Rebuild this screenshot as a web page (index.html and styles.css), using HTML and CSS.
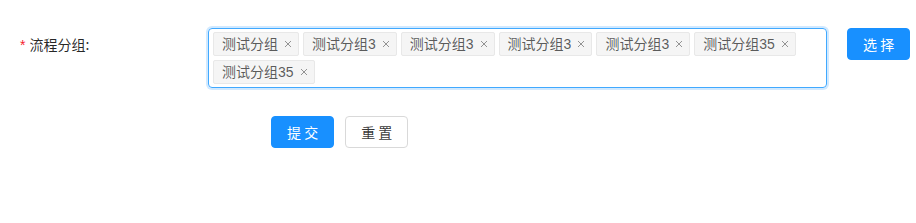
FILE: index.html
```html
<!DOCTYPE html>
<html lang="zh">
<head>
  <meta charset="UTF-8" />
  <title>流程分组</title>
  <link rel="stylesheet" href="styles.css">
</head>
<body>
  <form class="form">
    <div class="form-row">
      <label class="form-label"><span class="required">*</span>流程分组:</label>
      <div class="select-box">
        <span class="tag">测试分组<svg class="tag-close" viewBox="0 0 8 8"><path d="M1 1L7 7M7 1L1 7"/></svg></span>
        <span class="tag">测试分组3<svg class="tag-close" viewBox="0 0 8 8"><path d="M1 1L7 7M7 1L1 7"/></svg></span>
        <span class="tag">测试分组3<svg class="tag-close" viewBox="0 0 8 8"><path d="M1 1L7 7M7 1L1 7"/></svg></span>
        <span class="tag">测试分组3<svg class="tag-close" viewBox="0 0 8 8"><path d="M1 1L7 7M7 1L1 7"/></svg></span>
        <span class="tag">测试分组3<svg class="tag-close" viewBox="0 0 8 8"><path d="M1 1L7 7M7 1L1 7"/></svg></span>
        <span class="tag">测试分组35<svg class="tag-close" viewBox="0 0 8 8"><path d="M1 1L7 7M7 1L1 7"/></svg></span>
        <span class="tag">测试分组35<svg class="tag-close" viewBox="0 0 8 8"><path d="M1 1L7 7M7 1L1 7"/></svg></span>
      </div>
      <button type="button" class="btn btn-primary">选 择</button>
    </div>
    <div class="actions">
      <button type="button" class="btn btn-primary">提 交</button>
      <button type="button" class="btn">重 置</button>
    </div>
  </form>
</body>
</html>
```

FILE: styles.css
```css
* {
  margin: 0;
  padding: 0;
  box-sizing: border-box;
}

body {
  font-family: "Noto Sans CJK SC", "Noto Sans", sans-serif;
  font-size: 14px;
  color: rgba(0, 0, 0, 0.65);
  background: #fff;
  width: 916px;
  height: 223px;
}

.form {
  padding: 28px 0 0 20px;
}

.form-row {
  display: flex;
  align-items: flex-start;
}

.form-label {
  width: 188px;
  height: 32px;
  line-height: 32px;
  color: rgba(0, 0, 0, 0.85);
}

.required {
  color: #f5222d;
  margin-right: 4px;
  font-family: "Liberation Sans", sans-serif;
}

.select-box {
  width: 619px;
  min-height: 60px;
  border: 1px solid #40a9ff;
  border-radius: 4px;
  box-shadow: 0 0 0 2px rgba(24, 144, 255, 0.2);
  padding: 3px 4px;
  display: flex;
  flex-wrap: wrap;
  align-content: flex-start;
  gap: 4px;
}

.tag {
  display: inline-flex;
  align-items: center;
  height: 24px;
  padding: 0 6px 0 8px;
  background: #f5f5f5;
  border: 1px solid #e8e8e8;
  border-radius: 2px;
  line-height: 22px;
  font-family: "Liberation Sans", "Noto Sans CJK SC", sans-serif;
  color: rgba(0, 0, 0, 0.65);
}

.tag-close {
  width: 8px;
  height: 8px;
  margin-left: 6px;
  stroke: rgba(0, 0, 0, 0.4);
  stroke-width: 1;
  fill: none;
}

.btn {
  height: 32px;
  padding: 0 15px;
  font-family: inherit;
  font-size: 14px;
  border-radius: 4px;
  border: 1px solid #d9d9d9;
  background: #fff;
  color: rgba(0, 0, 0, 0.8);
  cursor: pointer;
}

.btn-primary {
  background: #1890ff;
  border-color: #1890ff;
  color: #fff;
}

.form-row .btn {
  margin-left: 20px;
}

.actions {
  display: flex;
  gap: 11px;
  margin: 28px 0 0 251px;
}
```
